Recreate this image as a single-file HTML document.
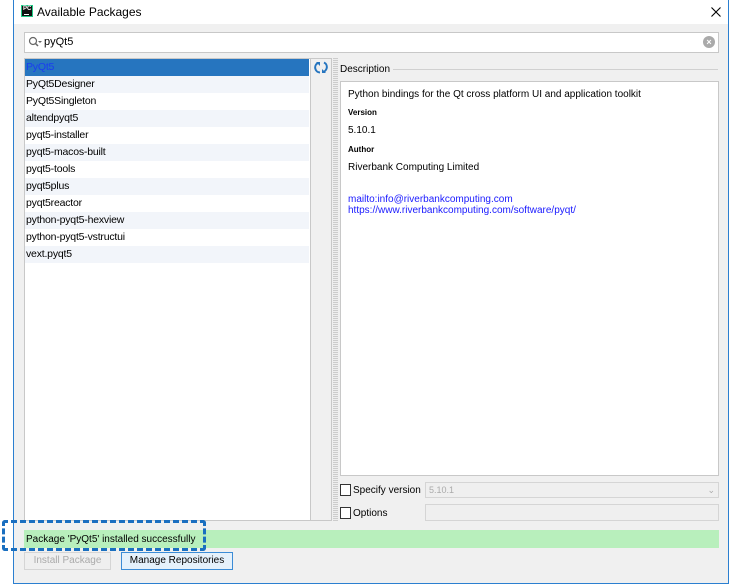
<!DOCTYPE html>
<html><head><style>
*{box-sizing:border-box;margin:0;padding:0}
body{width:729px;height:584px;background:#fff;font-family:"Liberation Sans",sans-serif;font-size:11px;color:#000;position:relative;overflow:hidden}
.a{position:absolute}
.win{left:13px;top:0;width:716px;height:584px;background:#f0f0f0;border:1px solid #2b7fd0;border-top:none}
.title{left:14px;top:0;width:714px;height:24px;background:#fff}
.row{position:absolute;left:0;width:284px;height:17px;padding-left:1px;line-height:17px;font-size:10.5px;letter-spacing:-0.2px}
.row:nth-child(even){background:#f2f5fa}
</style></head><body>
<div class="a win"></div>
<div class="a title"></div>
<div class="a" style="left:21px;top:5px;width:12px;height:12px;background:#111;border:1px solid #2c8"><div style="color:#fff;font-size:6px;font-weight:bold;line-height:7px;padding-left:1px">PC</div><div style="position:absolute;left:2px;top:8px;width:5px;height:1px;background:#fff"></div></div>
<div class="a" style="left:37px;top:5px;font-size:12px">Available Packages</div>
<svg class="a" style="left:711px;top:7px" width="10" height="10"><path d="M0.5 0.5L9.5 9.5M9.5 0.5L0.5 9.5" stroke="#000" stroke-width="1.1"/></svg>
<div class="a" style="left:24px;top:32px;width:695px;height:21px;background:#fff;border:1px solid #c8c8c8"></div>
<svg class="a" style="left:28px;top:36px" width="14" height="12"><circle cx="5" cy="5" r="3.5" fill="none" stroke="#666" stroke-width="1.2"/><line x1="7.5" y1="7.5" x2="10" y2="10" stroke="#666" stroke-width="1.5"/><path d="M10 5h4l-2 2z" fill="#666"/></svg>
<div class="a" style="left:44px;top:36px;font-size:11px">pyQt5</div>
<div class="a" style="left:703px;top:36px;width:12px;height:12px;border-radius:50%;background:#aaa;color:#fff;font-size:9px;text-align:center;line-height:12px;font-weight:bold">×</div>
<div class="a" style="left:24px;top:58px;width:287px;height:463px;background:#fff;border:1px solid #c8c8c8;overflow:hidden">
<div style="position:relative">
<div class="row" style="top:0;background:#2675bf;color:#1a3cf0">PyQt5</div>
<div class="row" style="top:17px">PyQt5Designer</div>
<div class="row" style="top:34px">PyQt5Singleton</div>
<div class="row" style="top:51px">altendpyqt5</div>
<div class="row" style="top:68px">pyqt5-installer</div>
<div class="row" style="top:85px">pyqt5-macos-built</div>
<div class="row" style="top:102px">pyqt5-tools</div>
<div class="row" style="top:119px">pyqt5plus</div>
<div class="row" style="top:136px">pyqt5reactor</div>
<div class="row" style="top:153px">python-pyqt5-hexview</div>
<div class="row" style="top:170px">python-pyqt5-vstructui</div>
<div class="row" style="top:187px">vext.pyqt5</div>
</div></div>
<div class="a" style="left:310px;top:58px;width:22px;height:463px;background:#f0f0f0;border:1px solid #c8c8c8"></div>
<svg class="a" style="left:314px;top:61px" width="14" height="13"><path d="M4 2A5 5 0 0 0 6 11.5M10 1.5A5 5 0 0 1 8 11" fill="none" stroke="#2675bf" stroke-width="2"/><path d="M2 1h4v4z" fill="#2675bf"/><path d="M12 12h-4v-4z" fill="#2675bf"/></svg>
<div class="a" style="left:333px;top:58px;width:5px;height:463px;background:repeating-linear-gradient(#ccc 0 1px,#eee 1px 2px)"></div>
<div class="a" style="left:340px;top:64px;font-size:10px">Description</div>
<div class="a" style="left:393px;top:69px;width:325px;height:1px;background:#d0d0d0"></div>
<div class="a" style="left:340px;top:81px;width:379px;height:395px;background:#fff;border:1px solid #c8c8c8"></div>
<div class="a" style="left:348px;top:89px;font-size:10px">Python bindings for the Qt cross platform UI and application toolkit</div>
<div class="a" style="left:348px;top:108px;font-size:8px;font-weight:bold">Version</div>
<div class="a" style="left:348px;top:125px;font-size:10px">5.10.1</div>
<div class="a" style="left:348px;top:145px;font-size:8px;font-weight:bold">Author</div>
<div class="a" style="left:348px;top:162px;font-size:10px">Riverbank Computing Limited</div>
<div class="a" style="left:348px;top:194px;font-size:10px;color:#1a1aff">mailto:info@riverbankcomputing.com</div>
<div class="a" style="left:348px;top:205px;font-size:10px;color:#1a1aff">https://www.riverbankcomputing.com/software/pyqt/</div>
<div class="a" style="left:340px;top:484px;width:11px;height:12px;background:#fff;border:1px solid #333"></div>
<div class="a" style="left:353px;top:485px;font-size:10px">Specify version</div>
<div class="a" style="left:425px;top:482px;width:294px;height:16px;background:#efefef;border:1px solid #d5d5d5;color:#aaa;font-size:9px;padding:2px 3px">5.10.1<span style="float:right">⌄</span></div>
<div class="a" style="left:340px;top:507px;width:11px;height:12px;background:#fff;border:1px solid #333"></div>
<div class="a" style="left:353px;top:508px;font-size:10px">Options</div>
<div class="a" style="left:425px;top:504px;width:294px;height:17px;background:#efefef;border:1px solid #d5d5d5"></div>
<div class="a" style="left:24px;top:530px;width:695px;height:18px;background:#b8efbc"></div>
<div class="a" style="left:26px;top:534px;font-size:10px">Package 'PyQt5' installed successfully</div>
<div class="a" style="left:2px;top:520px;width:204px;height:31px;border:3px dashed #1a6fc0;border-radius:3px"></div>
<div class="a" style="left:24px;top:552px;width:87px;height:18px;background:#efefef;border:1px solid #d5d5d5;color:#aaa;font-size:10px;text-align:center;line-height:16px;white-space:nowrap">Install Package</div>
<div class="a" style="left:121px;top:552px;width:112px;height:18px;background:#e5f1fb;border:1px solid #3c8cd6;font-size:10px;text-align:center;line-height:16px">Manage Repositories</div>
</body></html>
